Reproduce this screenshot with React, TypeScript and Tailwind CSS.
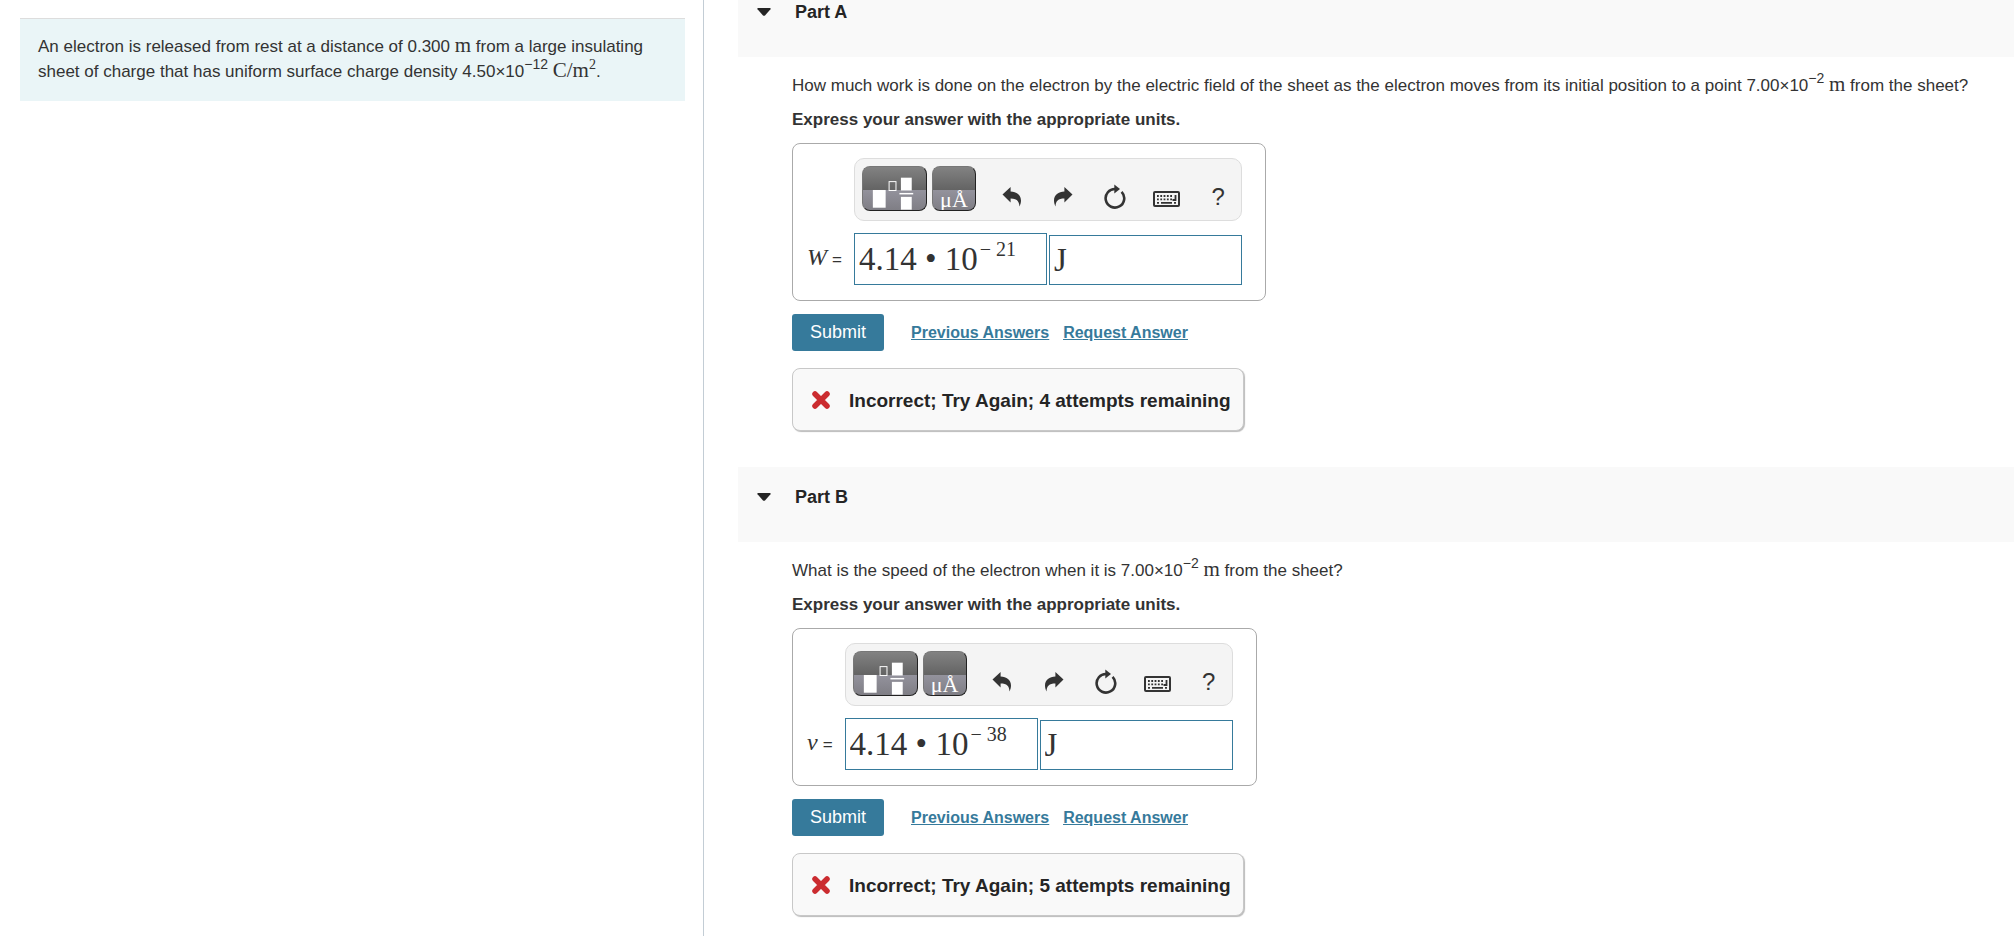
import { useState, type ReactNode } from "react";

interface PartProps {
  id: string;
  title: string;
  question: ReactNode;
  symbol: string;
  exponent: string;
  unit: string;
  attempts: number;
}

function Unit({ children }: { children: ReactNode }) {
  return (
    <span className="font-['Liberation_Serif',serif] text-[21px] leading-none">{children}</span>
  );
}

function Power({ base, exp }: { base: string; exp: string }) {
  return (
    <span className="whitespace-nowrap">
      {base}×10
      <span className="relative -top-2 text-[14px] leading-none">−{exp}</span>
    </span>
  );
}

function TemplatesIcon() {
  return (
    <svg width="64" height="44" viewBox="0 0 64 44" fill="#fff" aria-hidden="true">
      <rect x="10" y="23" width="13" height="18" />
      <rect x="26.5" y="14.5" width="7" height="9" fill="none" stroke="#fff" />
      <rect x="38.500" y="10.500" width="11" height="13" />
      <rect x="37" y="26" width="14" height="1.500" />
      <rect x="38.500" y="30" width="11" height="13" />
    </svg>
  );
}

function UndoIcon() {
  return (
    <svg width="20" height="20" viewBox="0 0 20 20" fill="#333" aria-hidden="true">
      <path d="M0.5 7.6 8.6 0v4.6C14.5 4.7 19 8 19 13.6c0 2.1-.5 4.2-1.6 6 0-5.4-2.6-8-8.8-8v3.8z" />
    </svg>
  );
}

function RedoIcon() {
  return (
    <svg width="20" height="20" viewBox="0 0 20 20" fill="#333" aria-hidden="true">
      <path d="M19.5 7.6 11.4 0v4.6C5.5 4.7 1 8 1 13.6c0 2.1.5 4.2 1.6 6 0-5.4 2.6-8 8.8-8v3.8z" />
    </svg>
  );
}

function ResetIcon() {
  return (
    <svg width="24" height="26" viewBox="0 0 24 26" fill="none" aria-hidden="true">
      <path d="M18.600 7.800A9.300 9.300 0 1 1 12.500 5" stroke="#333" strokeWidth="2.600" />
      <path d="M11.3.5 17 5l-5.7 4.6z" fill="#333" />
    </svg>
  );
}

function KeyboardIcon() {
  return (
    <svg width="27" height="16" viewBox="0 0 27 16" fill="none" stroke="#333" aria-hidden="true">
      <rect x="1" y="1" width="25" height="14" rx="1" strokeWidth="2" />
      <path d="M4 5h16M4 8.300h15" strokeWidth="1.800" strokeDasharray="1.800 1.500" />
      <path d="M4 11.800h2M8 11.800h11M21 11.800h2M22.500 4v5h-3" strokeWidth="1.800" />
    </svg>
  );
}

function CrossIcon() {
  return (
    <svg width="18" height="18" viewBox="0 0 18 18" fill="none" aria-hidden="true">
      <path d="M3 3l12 12M15 3 3 15" stroke="#cb2c30" strokeWidth="5.500" strokeLinecap="round" />
    </svg>
  );
}

const darkButton =
  "flex h-[45px] justify-center overflow-hidden rounded-lg border border-t-[#777] border-l-[#777] border-r-[#222] border-b-[#222] bg-[linear-gradient(#828282,#636363_54%,#93929c_54%,#7f7e85)] text-white";

function Toolbar() {
  return (
    <div className="flex h-[63px] w-[388px] items-start rounded-[10px] border border-[#ddd] bg-[#f4f4f4] pt-[7px] pl-[7px]">
      <button type="button" aria-label="Templates" className={`${darkButton} w-[65px]`}>
        <TemplatesIcon />
      </button>
      <button
        type="button"
        aria-label="Symbols"
        className={`${darkButton} ml-[5px] w-[44px] items-end font-['Liberation_Serif',serif] text-[22px] leading-5`}
      >
        μÅ
      </button>
      <div className="-mr-[3px] flex h-[61px] flex-1 items-center pl-[10px]">
        <button type="button" aria-label="Undo" className="flex flex-1 justify-center">
          <UndoIcon />
        </button>
        <button type="button" aria-label="Redo" className="flex flex-1 justify-center">
          <RedoIcon />
        </button>
        <button type="button" aria-label="Reset" className="flex flex-1 justify-center">
          <ResetIcon />
        </button>
        <button type="button" aria-label="Keyboard shortcuts" className="flex flex-1 justify-center pt-1">
          <KeyboardIcon />
        </button>
        <button type="button" aria-label="Help" className="flex-1 text-[24px] leading-6 text-[#333]">
          ?
        </button>
      </div>
    </div>
  );
}

function Part({ id, title, question, symbol, exponent, unit, attempts }: PartProps) {
  const [open, setOpen] = useState(true);

  return (
    <section className="pb-9">
      <h2 className="bg-[#f9f9f9]">
        <button
          type="button"
          aria-expanded={open}
          onClick={() => setOpen(!open)}
          className="flex h-[75px] w-full items-start gap-6 pt-5 pl-[19px] text-[18px] leading-[20px] font-bold text-[#252525]"
        >
          <svg width="14" height="20" viewBox="0 0 14 20" fill="#252525" aria-hidden="true">
            <path d="M1 6h12q1 .5.500 1.200L8 13.400q-1 .9-2 0L.5 7.200Q0 6.500 1 6z" />
          </svg>
          {title}
        </button>
      </h2>
      {open && (
        <div className="pl-[54px]">
          <p className="pt-4 text-[17px] leading-[25px]">{question}</p>
          <p className="pt-[9px] text-[17px] leading-[25px] font-bold">
            Express your answer with the appropriate units.
          </p>
          <div className="mt-[11px] flex w-fit flex-col items-end rounded-lg border border-[#aaa] pt-[14px] pr-[23px] pb-[15px] pl-[14px]">
            <Toolbar />
            <div className="mt-3 flex items-end">
              <label
                htmlFor={`${id}-value`}
                className="flex items-baseline gap-[5px] self-center pr-3 text-[17px]"
              >
                <i className="font-['Liberation_Serif',serif] text-[24px] leading-6">{symbol}</i>=
              </label>
              <div className="flex h-[52px] w-[193px] items-center border border-[#367a9b] pl-1 font-['Liberation_Serif',serif]">
                <input
                  id={`${id}-value`}
                  defaultValue="4.14 • 10"
                  className="field-sizing-content text-[33px] leading-[40px] outline-none"
                />
                <input
                  aria-label="Exponent"
                  defaultValue={`− ${exponent}`}
                  className="field-sizing-content pb-5 pl-[2px] text-[20px] leading-5 outline-none"
                />
              </div>
              <input
                aria-label="Units"
                defaultValue={unit}
                className="ml-[2px] h-[50px] w-[193px] border border-[#367a9b] pl-1 font-['Liberation_Serif',serif] text-[33px] outline-none"
              />
            </div>
          </div>
          <div className="mt-[13px] flex items-center">
            <button
              type="button"
              className="h-[37px] w-[92px] rounded-[3px] bg-[#367a9b] text-[18px] text-white"
            >
              Submit
            </button>
            <div className="flex gap-[14px] pl-[27px] text-[16px] leading-5 font-bold text-[#367a9b] underline">
              <a href="#previous">Previous Answers</a>
              <a href="#request">Request Answer</a>
            </div>
          </div>
          <div className="mt-[17px] flex h-[63px] w-fit items-center gap-[19px] rounded-lg border border-[#c8c8c8] bg-[#f9f9f9] pr-3 pl-[19px] text-[19px] font-bold text-[#252525] shadow-[1px_1px_1px_#bbb]">
            <CrossIcon />
            <span className="pt-1">Incorrect; Try Again; {attempts} attempts remaining</span>
          </div>
        </div>
      )}
    </section>
  );
}

export default function App() {
  return (
    <div className="flex h-screen overflow-hidden bg-white font-['Liberation_Sans',Arial,sans-serif] text-[#333]">
      <aside className="w-[704px] shrink-0 border-r border-[#c3cdd5] pt-[18px] pr-[18px] pl-5">
        <div className="border-t border-[#ddd] bg-[#eaf5f7] pt-[15px] pr-4 pb-[17px] pl-[18px] text-[17px] leading-[25px]">
          An electron is released from rest at a distance of 0.300 <Unit>m</Unit> from a large
          insulating sheet of charge that has uniform surface charge density{" "}
          <Power base="4.50" exp="12" />{" "}
          <Unit>
            C/m<span className="relative -top-2 text-[14px]">2</span>
          </Unit>
          .
        </div>
      </aside>
      <main className="ml-[34px] min-w-0 flex-1">
        <div className="-mt-[18px]">
          <Part
            id="part-a"
            title="Part A"
            question={
              <>
                How much work is done on the electron by the electric field of the sheet as the
                electron moves from its initial position to a point <Power base="7.00" exp="2" />{" "}
                <Unit>m</Unit> from the sheet?
              </>
            }
            symbol="W"
            exponent="21"
            unit="J"
            attempts={4}
          />
          <Part
            id="part-b"
            title="Part B"
            question={
              <>
                What is the speed of the electron when it is <Power base="7.00" exp="2" />{" "}
                <Unit>m</Unit> from the sheet?
              </>
            }
            symbol="v"
            exponent="38"
            unit="J"
            attempts={5}
          />
        </div>
      </main>
    </div>
  );
}
